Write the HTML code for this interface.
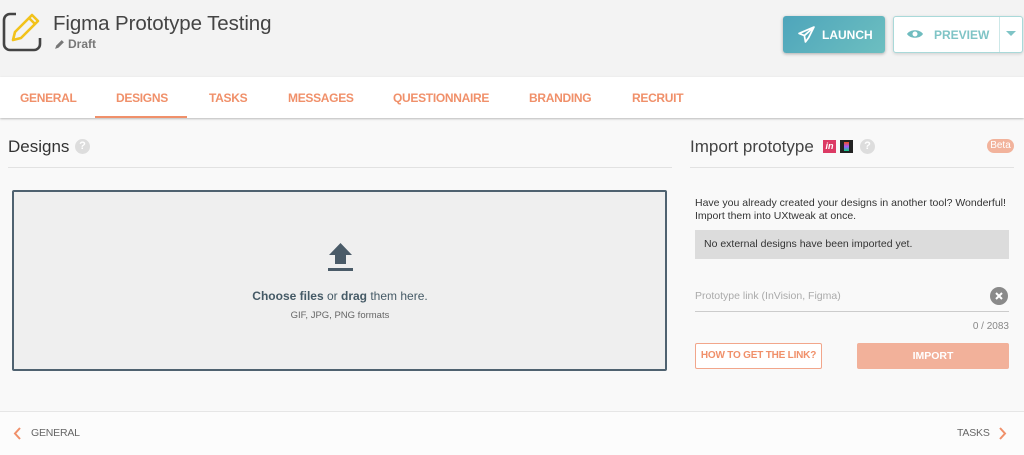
<!DOCTYPE html><html><head><style>
*{margin:0;padding:0;box-sizing:border-box}
body{width:1024px;height:455px;overflow:hidden;background:#f9f9f9;font-family:"Liberation Sans",sans-serif;position:relative}
.a{position:absolute}
.hdr{left:0;top:0;width:1024px;height:77px;background:#f3f3f3}
.tabs{left:0;top:77px;width:1024px;height:41px;background:#fff;box-shadow:0 1px 2px rgba(0,0,0,.25)}
.tab{position:absolute;top:14px;font-size:12px;font-weight:bold;color:#f0906a;letter-spacing:-.3px;white-space:nowrap}
.foot{left:0;top:411px;width:1024px;height:44px;background:#fcfcfc;border-top:1px solid #e6e6e6}
</style></head><body>
<div class="a hdr"></div>
<svg class="a" style="left:2px;top:10px" width="42" height="42" viewBox="0 0 42 42"><path d="M14 4H8a6 6 0 0 0-6 6v24a6 6 0 0 0 6 6h24a6 6 0 0 0 6-6v-6" fill="none" stroke="#444" stroke-width="2.6"/><path d="M30 5l6 6-17 17-8 2 2-8z" fill="none" stroke="#f2c21b" stroke-width="2.6" stroke-linejoin="round"/><path d="M27 8l6 6" stroke="#f2c21b" stroke-width="2.6"/></svg>
<div class="a" style="left:53px;top:12px;font-size:20.5px;color:#444;letter-spacing:-.1px">Figma Prototype Testing</div>
<svg class="a" style="left:54px;top:39px" width="11" height="11" viewBox="0 0 10 10"><path d="M1 9l1-3 5-5 2 2-5 5z" fill="#777"/></svg>
<div class="a" style="left:68px;top:37px;font-size:12px;font-weight:bold;color:#777">Draft</div>
<div class="a" style="left:783px;top:16px;width:102px;height:37px;border-radius:3px;background:linear-gradient(135deg,#4ea5bb,#6dbfc0);box-shadow:0 1px 3px rgba(0,0,0,.3)"></div>
<svg class="a" style="left:798px;top:26px" width="17" height="17" viewBox="0 0 16 16"><path d="M15 1L1 7l5 2 1 6 3-4 5-10zM6 9l8-7" fill="none" stroke="#fff" stroke-width="1.6" stroke-linejoin="round"/></svg>
<div class="a" style="left:822px;top:28px;font-size:12px;font-weight:bold;color:#fff">LAUNCH</div>
<div class="a" style="left:893px;top:16px;width:130px;height:37px;border-radius:3px;background:#fff;border:1px solid #a9d9d9;box-shadow:0 1px 3px rgba(0,0,0,.15)"></div>
<div class="a" style="left:999px;top:17px;width:1px;height:35px;background:#cde8e8"></div>
<svg class="a" style="left:906px;top:27px" width="18" height="14" viewBox="0 0 18 12"><path d="M1 6C4 1 14 1 17 6 14 11 4 11 1 6z" fill="#6fbcbf"/><circle cx="9" cy="6" r="2.5" fill="#fff"/></svg>
<div class="a" style="left:934px;top:28px;font-size:12px;font-weight:bold;color:#7fc4c6">PREVIEW</div>
<svg class="a" style="left:1006px;top:31px" width="10" height="6"><path d="M0 0h10L5 5z" fill="#7fc4c6"/></svg>
<div class="a tabs">
<div class="tab" style="left:20px">GENERAL</div><div class="tab" style="left:116px">DESIGNS</div><div class="tab" style="left:209px">TASKS</div><div class="tab" style="left:288px">MESSAGES</div><div class="tab" style="left:393px">QUESTIONNAIRE</div><div class="tab" style="left:529px">BRANDING</div><div class="tab" style="left:632px">RECRUIT</div>
<div class="a" style="left:95px;top:39px;width:92px;height:2px;background:#f0906a"></div></div>
<div class="a" style="left:8px;top:137px;font-size:17px;color:#333">Designs</div>
<div class="a" style="left:75px;top:139px;width:15px;height:15px;border-radius:50%;background:#ddd;color:#fff;font-size:11px;font-weight:bold;text-align:center;line-height:15px">?</div>
<div class="a" style="left:8px;top:167px;width:664px;height:1px;background:#e2e2e2"></div>
<div class="a" style="left:12px;top:190px;width:655px;height:181px;background:#efefef;border:2px solid #4f6270;border-radius:2px"></div>
<svg class="a" style="left:328px;top:243px" width="25" height="29" viewBox="0 0 25 29"><path d="M12.5 0L24 12h-6v9H7v-9H1z" fill="#4a5b68"/><rect x="0" y="25" width="25" height="3" fill="#4a5b68"/></svg>
<div class="a" style="left:0;top:289px;width:680px;text-align:center;font-size:12px;color:#455a66"><b>Choose files</b> or <b>drag</b> them here.</div>
<div class="a" style="left:0;top:310px;width:680px;text-align:center;font-size:9.5px;color:#666">GIF, JPG, PNG formats</div>
<div class="a" style="left:690px;top:137px;font-size:17px;color:#444">Import prototype</div>
<div class="a" style="left:823px;top:140px;width:13px;height:13px;background:#dc3a64;color:#fff;font-size:9px;font-weight:bold;font-style:italic;text-align:center;line-height:13px">in</div>
<div class="a" style="left:840px;top:140px;width:13px;height:13px;background:#222"><div class="a" style="left:4px;top:2px;width:5px;height:9px;background:linear-gradient(#f24e1e,#a259ff 50%,#0acf83)"></div></div>
<div class="a" style="left:860px;top:139px;width:15px;height:15px;border-radius:50%;background:#ddd;color:#fff;font-size:11px;font-weight:bold;text-align:center;line-height:15px">?</div>
<div class="a" style="left:987px;top:139px;width:27px;height:14px;border-radius:7px;background:#f2b39c;color:#fff;font-size:10px;text-align:center;line-height:14px">Beta</div>
<div class="a" style="left:690px;top:167px;width:324px;height:1px;background:#e2e2e2"></div>
<div class="a" style="left:695px;top:197px;font-size:10.5px;color:#333;line-height:13px">Have you already created your designs in another tool? Wonderful!<br>Import them into UXtweak at once.</div>
<div class="a" style="left:695px;top:230px;width:314px;height:29px;background:#dcdcdc;font-size:10.5px;color:#333;padding:8px 0 0 9px">No external designs have been imported yet.</div>
<div class="a" style="left:695px;top:290px;font-size:10.5px;color:#aaa">Prototype link (InVision, Figma)</div>
<div class="a" style="left:990px;top:287px;width:18px;height:18px;border-radius:50%;background:#8a8a8a"><svg width="18" height="18"><path d="M6 6l6 6M12 6l-6 6" stroke="#fff" stroke-width="2"/></svg></div>
<div class="a" style="left:695px;top:311px;width:314px;height:1px;background:#ccc"></div>
<div class="a" style="left:900px;top:321px;width:109px;text-align:right;font-size:10px;color:#888">0 / 2083</div>
<div class="a" style="left:695px;top:343px;width:127px;height:26px;border:1px solid #f2a68b;border-radius:2px;background:#fff;color:#f0906a;font-size:10px;font-weight:bold;text-align:center;line-height:24px;white-space:nowrap;letter-spacing:-.2px">HOW TO GET THE LINK?</div>
<div class="a" style="left:857px;top:343px;width:152px;height:26px;border-radius:2px;background:#f2b19a;color:#fff;font-size:10.5px;font-weight:bold;text-align:center;line-height:26px">IMPORT</div>
<div class="a foot"></div>
<svg class="a" style="left:13px;top:427px" width="8" height="13"><path d="M7 1L2 6.5 7 12" fill="none" stroke="#f0906a" stroke-width="2"/></svg>
<div class="a" style="left:31px;top:427px;font-size:10.5px;color:#666;letter-spacing:-.2px">GENERAL</div>
<div class="a" style="left:957px;top:427px;font-size:10.5px;color:#666;letter-spacing:-.2px">TASKS</div>
<svg class="a" style="left:999px;top:427px" width="8" height="13"><path d="M1 1l5 5.5L1 12" fill="none" stroke="#f0906a" stroke-width="2"/></svg>
</body></html>
